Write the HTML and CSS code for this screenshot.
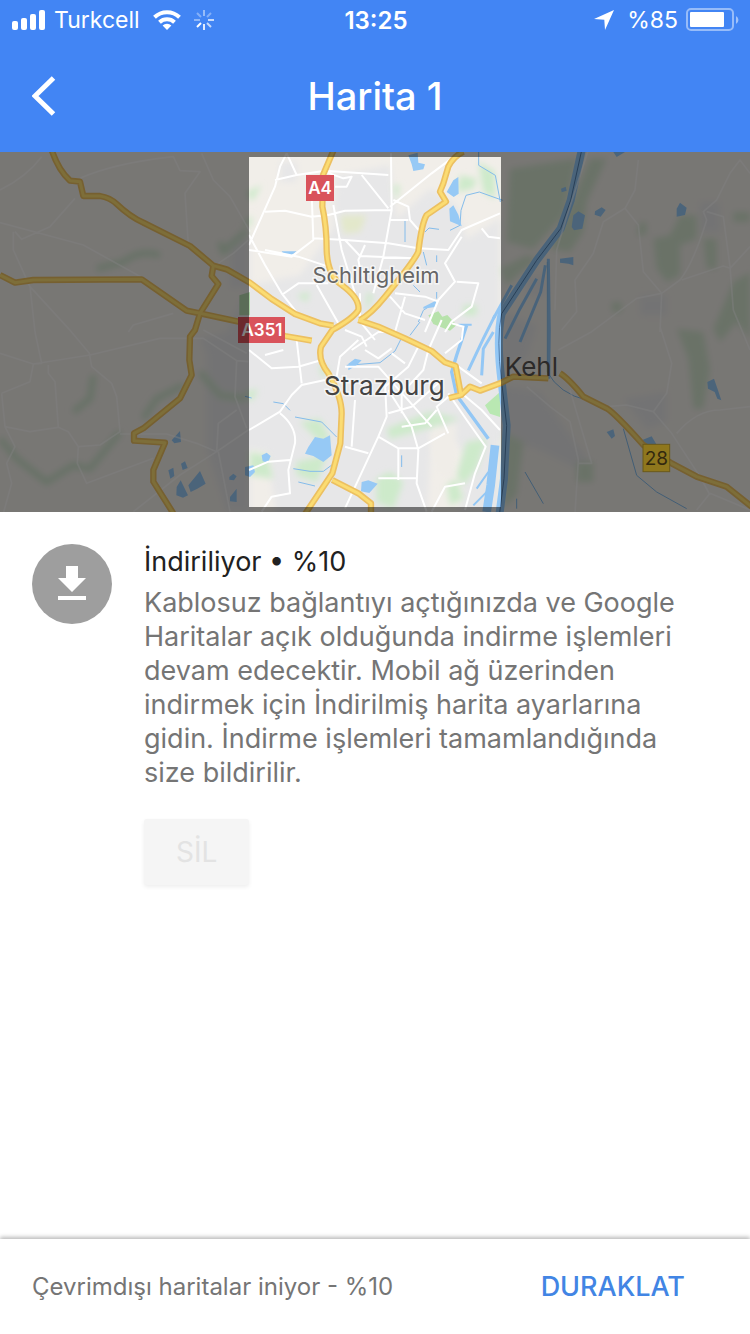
FILE: index.html
```html
<!DOCTYPE html>
<html lang="tr">
<head>
<meta charset="utf-8">
<meta name="viewport" content="width=device-width, initial-scale=1">
<title>Harita 1</title>
<link rel="stylesheet" href="styles.css">
</head>
<body>
<div class="screen">
  <header class="top">
    <div class="status">
      <div class="status-side">
        <svg class="signal" viewBox="0 0 34 22" aria-hidden="true"><rect x="0" y="12" width="6" height="9" rx="2"/><rect x="9" y="9" width="6" height="12" rx="2"/><rect x="18" y="5" width="6" height="16" rx="2"/><rect x="27" y="1" width="6" height="20" rx="2"/></svg>
        <span>Turkcell</span>
        <svg class="wifi" viewBox="0 0 28 22" aria-hidden="true"><path d="M1.500 8.300a18 18 0 0 1 25 0" class="arc"/><path d="M6.500 13.200a11 11 0 0 1 15 0" class="arc"/><path d="M14 21l-4.400-4.400a6.400 6.400 0 0 1 8.800 0z"/></svg>
        <svg class="spinner" viewBox="0 0 20 20" aria-hidden="true"><path d="M10 0v6" opacity=".45"/><path d="M17 3l-4 4" opacity=".35"/><path d="M20 10h-6" opacity=".7"/><path d="M17 17l-4-4" opacity=".7"/><path d="M10 20v-6" opacity=".85"/><path d="M3 17l4-4"/><path d="M0 10h6" opacity=".4"/><path d="M3 3l4 4" opacity=".35"/></svg>
      </div>
      <time class="clock">13:25</time>
      <div class="status-side status-end">
        <svg class="arrow" viewBox="0 0 20 20" aria-hidden="true"><path d="M20 0L11 20 10.300 9.700 0 9z"/></svg>
        <span>%85</span>
        <svg class="battery" viewBox="0 0 54 24" aria-hidden="true"><rect x="1" y="1" width="46" height="21" rx="4" fill="none" stroke="#fff" stroke-width="2" opacity=".45"/><rect x="4" y="4" width="34" height="15" rx="1"/><path d="M50 8a4.500 4.500 0 0 1 0 8z" opacity=".5"/></svg>
      </div>
    </div>
    <nav class="nav">
      <button class="back" type="button" aria-label="Geri"><svg viewBox="0 0 24 40"><path d="M21.500 2L3 20l18.500 18"/></svg></button>
      <h1 class="title">Harita 1</h1>
    </nav>
  </header>

  <main class="main">
    <svg class="map" viewBox="0 0 2250 1080" preserveAspectRatio="xMidYMid slice" role="img" aria-label="Strazburg haritası">
      <defs>
        <filter id="soft" x="-20%" y="-20%" width="140%" height="140%"><feGaussianBlur stdDeviation="10"/></filter>
        <g id="highways">
          <g transform="translate(0 -6)">
            <path d="M155 0Q175 60 210 92L240 95 250 138 300 138Q330 143 350 162 390 200 430 218L570 288 640 347 680 358 750 398 815 447 885 492 960 520 1000 527"/>
            <path d="M0 375L45 398 100 390 425 388 560 482 600 490 740 520 855 558 935 572"/>
            <path d="M640 347L635 378 655 402 600 490 585 540 570 560 568 630 575 675 540 745 430 835 402 850 402 872 495 878 460 960 460 995 520 1090"/>
          </g>
          <g transform="translate(735 -6)">
            <path d="M266 0L234 75 232 170Q245 230 245 300 247 375 290 405 345 445 340 480 325 505 262 540L228 590Q218 630 250 670 290 740 290 790L286 880 262 970 178 1095"/>
            <path d="M655 5Q625 20 610 50L595 100 585 125 603 155 545 195Q530 220 520 305 510 330 420 440 380 490 345 510"/>
            <path d="M340 510L400 530 480 565 560 603 600 637 632 648 648 735 612 744"/>
            <path d="M648 735L675 710 705 722 765 700 805 680 910 685"/>
            <path d="M262 990L340 1030 378 1060 378 1095"/>
          </g>
          <path transform="translate(1500 534)" d="M180 130Q205 145 250 200L320 235Q345 250 430 345L515 400 590 440 680 470 755 530"/>
        </g>
      </defs>

      <rect width="2250" height="1080" fill="#f1eee9"/>

      <!-- built-up land -->
      <g fill="#e7e7e8" filter="url(#soft)">
        <path d="M1010 70L1170 40 1190 200 1290 110 1370 160 1400 260 1500 200V1080H1380L1390 900 1300 800 1280 1090 830 1090 800 900 690 880 660 700 600 560 680 540 745 400 900 370 1000 230Z"/>
        <path d="M840 30h50v60h-50zM690 270l60-20v150l-60 10zM1500 700l120 20 90 130 60 80-40 20-120-60-110-30zM1590 130h50v60h-50zM1580 370h60v60h-60zM2100 150h60v90h-60zM1920 430h80v60h-80z"/>
        <path d="M620 560l130 50v470h-70l-60-190zM1870 740l130-20v90l-60 20zM1510 480l100 40-30 100-80 20z"/>
      </g>
      <path d="M1290 840l80-30-10 180-50-30z" fill="#f0ede8" filter="url(#soft)"/>

      <!-- woods and parks outside the city -->
      <g class="woods" filter="url(#soft)">
        <path d="M1530 50L1730 20 1690 190 1600 290 1520 270ZM1500 350l80-40 30 10-90 80zM1770 20h50l-60 130-10 90-40 60-60-10 70-150z"/>
        <path d="M1960 260l50-10 30-60h50v70l-50 20v90l-40 20-30-40zM2110 260h40v90h-30zM2200 390l50-30v200l-40-50-50 60-20-40zM1920 210h20v40h-30zM2200 180h50v30h-50z"/>
        <path d="M2030 530l80 10 20 110-20 120h-30l-15-150zM1510 840l60 30-20 160-40 40zM1730 930h50v60h-50zM1835 450h30v30h-30z"/>
      </g>
      <g class="river-woods" filter="url(#soft)">
        <path d="M290 350l80-20q50-40 110-20M0 860l50 60 90 70 80-50 50 10 90-110M220 780l50-40 10-70M430 800l40-60 80-40M600 660l60 70 80 10M660 270l10 30 70-65"/>
      </g>

      <!-- parks in the city -->
      <g fill="#cdeaca" filter="url(#soft)">
        <path d="M740 120l45-20-30 50zM725 220l30-30v30zM1380 70l50 10-10 30-50 10zM1435 30l50 30v80l-35-20zM1180 100h20l-10 50z"/>
        <path d="M1100 420l20 10-20 50zM955 640l30 10-15 30zM890 430l40-10-10 30zM1390 460h40v30h-40z"/>
        <path d="M1400 870l60-10-30 90-40 50-20-30zM890 930l90-20-30 80-60-20zM750 900l50 10 20 70-70-10zM735 720l40-10-20 40zM900 810l60-10 30 60-30 10z"/>
        <path d="M1160 830l130-50 90 20-100 30-110 30zM1130 980l40-20 40 30-30 80-50-20zM1340 1000l30-20 20 60-40 20z"/>
      </g>
      <path d="M1020 190h80l-20 50-50 5z" fill="#e3e8cb" filter="url(#soft)"/>
      <path d="M1285 490l30-12 12 16 15-5 28 30-20 17-50-20z" fill="#b7e2ab"/>
      <path d="M1455 760l45-40v75l-30-10z" fill="#b9e8b2"/>
      <path d="M718 430l32-10v70h-32z" fill="#b4d8ae"/>

      <!-- rivers -->
      <g fill="none" stroke="#93c7f5" stroke-linejoin="round">
        <path d="M1745 -5L1712 145 1682 230 1610 325 1505 485Q1488 560 1505 690L1520 820 1512 980 1498 1090" stroke-width="24"/>
        <path d="M1645 320L1648 534 1646 680M1636 340L1622 420 1560 570M1610 380L1560 470 1515 560M1535 400L1480 500" stroke-width="9"/>
        <path d="M1485 490L1450 560 1405 655M1480 540L1450 590 1445 670" stroke-width="9"/>
        <path d="M1400 520L1370 610 1355 660 1370 730 1465 860" stroke-width="10"/>
        <path d="M1485 880L1472 1000 1460 1080" stroke-width="26"/>
        <path d="M1465 960L1430 1010M1470 1010L1420 1060M1375 518h40" stroke-width="6"/>
      </g>
      <g fill="none" stroke="#84bceb" stroke-width="3">
        <path d="M1436 0v40l50 30 15 80M1508 145l-70-25-40 10-15 45-3 45-30 15M1275 240l12-12 30 4M1215 205v65M1270 300l10 40M1310 310v20M1240 400l20 20M1310 420v20M1255 510l15-35 30-20M1230 550l30-40M1040 640l100-8 45-35 20-40M885 795l80 15 45 45M880 950l50 8 40 0 40-30M895 990l50 12M1205 910v35M735 733l20 5M820 750l30 5 20 20"/>
        <path d="M1642 330v330q35 65 120 85M1870 830l40 140 60 50 90 50M1575 960l55 95M1550 1040v30"/>
      </g>
      <path d="M1745 -5L1712 145 1682 230 1610 325 1505 485Q1488 560 1505 690L1520 820 1512 980 1498 1090" fill="none" stroke="#527eac" stroke-width="3"/>

      <!-- lakes -->
      <g fill="#96c9f5">
        <path d="M925 885l20-30 25 5 20-10 5 60-25 20-30-18-25-7zM785 910l15-8 12 10-8 20-16-4zM735 945l25-5 5 20-15 15-15-5zM1085 990l20-5 28 10-25 28-25-5z"/>
        <path d="M1225 10l28-8 2 30 20 5-5 15-30 5-5-20zM1340 120l20-35 15-10 1 50-15 10zM1348 170l12-10 15 28 10 35-35-15zM845 298h45l-20 15-20-8zM1270 465l40-20-5 20-35 5zM1045 635l20-15 20 5-15 15-25 15z"/>
        <path d="M515 865l25-28 3 33-20 4zM505 955l15-8 3 25-12 8zM543 935l12-7 8 20-15 6zM530 1005l12-20 22 45-15 7-20-7zM565 1000l35-43 17 38-25 15-20 10zM688 975l12-10 10 8-8 12-14-2zM690 1035l20-25v40l-20-2zM2122 690l20-10 12 35 10 30-12-5-8-20-20-10z"/>
        <path d="M1715 225l5-35 15-12 20 12-8 40-25 5zM1785 178l20-12 12 8-15 20-18-6zM2030 170l10-18 20 15-5 22-25 5zM1680 320l40-5v25l-15-5-25-3zM1683 110l14-6 3 12-15 5zM1840 0h35l-25 15zM1820 840l20-8 5 20-10 8zM1925 865l30-12 15 25-40 5z"/>
      </g>

      <!-- local roads -->
      <g class="streets outer" transform="translate(0 -6)">
        <path d="M0 120Q80 80 125 20M0 218L250 285 430 385M240 85Q340 40 520 20L540 62 600 65 555 130 565 285M605 10L640 90 690 140 750 245M40 245V300L90 410 105 546M45 245L65 268 150 230 225 145M90 410L205 535M385 546L400 525 520 490M745 270L700 310 640 350M105 546L125 640 100 642 90 695 5 730M0 610L100 642 270 615 480 565H610L710 632 745 635M205 535L268 610 275 650 335 700 350 740 360 845 300 885 235 890 205 845 175 832 165 695 145 670V645M5 730L15 830 45 890 20 940 35 1000 10 1090M15 830L90 845 175 832M235 890L232 940 260 1000 460 925M360 852H500L590 880 650 905 745 840M400 1085L540 975 650 905M655 905L690 1085M650 905L655 820 710 780M610 540L740 610M710 632L705 740 740 835"/>
      </g>
      <g class="streets outer" transform="translate(1500 -6)">
        <path d="M265 0L200 200 170 300 165 480M415 30L405 120 375 175 310 215 280 310 225 390 230 485 185 540M375 175L415 225 430 365 485 430 480 546M175 600L275 545 410 445 485 430 540 390Q580 340 620 210L610 185 650 150 690 70 720 30 750 70M620 185L670 200 690 350 700 480 750 600M545 390L670 348 690 355 750 290M480 530L515 640 500 730 460 785 380 765 320 770M460 785L515 850 600 980 630 1035M530 850Q590 780 660 780L750 770M80 710L150 770 210 815 235 930 225 1090M210 720L275 940 235 940M630 1030L750 1080M630 1030L590 1080"/>
      </g>
      <g class="streets" transform="translate(735 -6)">
        <path d="M12 285L90 110 105 50 125 10M90 90L155 75 240 62 430 75M155 75L125 10M60 185L120 182 200 200 250 195 300 182 440 180M438 10L440 180 415 320 385 430M240 65L295 85 320 80 305 110 270 110M350 75L430 175M435 170L560 70 640 10M445 150L490 170 495 210 530 250M435 210H490M200 130L205 270 140 320 12 300M205 265L300 270 430 280 520 295 610 300 650 240 765 190M265 165L290 300 330 430M300 270L345 318 505 325M360 285L340 330 350 380M12 255L60 345 110 430 165 500M60 300L160 320 250 350M110 435L160 400 250 400M650 260L600 340 630 395 580 450 540 546M635 395L700 400 680 470 620 515 600 546M450 430L540 440 580 455M480 440L450 546M435 440L480 490 540 510M710 235L730 260 765 265M215 405L280 520M345 515V430"/>
        <path d="M350 520L390 570M590 510L550 600 535 660 470 730 470 790M620 520L655 530 650 570 600 610M300 540L350 560 365 590M340 570L285 620 275 680M320 600L400 546 430 546M440 595L400 625 360 600M520 590L490 650 420 710M12 600L80 655 160 650 230 630M60 615L115 600M155 570L170 700M240 690L170 705 140 735 105 785 12 840M105 790Q155 830 150 880L130 960 135 1030 80 1040 50 1085M12 960L70 935 135 930M420 700L425 800 400 860 300 1075M400 860L460 895 520 895 600 850M430 720L500 830 520 900 515 1000 545 1085M460 895V990M400 985H515M300 890L370 910M330 750L320 890M430 790L500 770 580 700M480 640L440 610M610 740L575 770 610 850M610 730L665 810 722 890 690 970 660 1080M650 730L710 780 765 840M470 830L540 820 575 780M640 650L710 700M300 650H400L480 740 560 830M560 1085L600 1010 660 1000"/>
      </g>

      <use href="#highways" class="casing"/>
      <use href="#highways" class="asphalt"/>

      <rect x="918" y="69" width="84" height="78" fill="#d9535b"/>
      <rect x="714" y="495" width="141" height="78" fill="#d9535b"/>
      <g text-anchor="middle">
        <text class="shield" x="960" y="127">A4</text>
        <text class="shield" x="786" y="552">A351</text>
        <text class="place suburb" x="1128" y="394">Schiltigheim</text>
        <text class="place" x="1153" y="729">Strazburg</text>
      </g>
      <path d="M0 0H2250V1080H0ZM747 15V1065H1503V15Z" fill-rule="evenodd" fill="#000" fill-opacity=".5"/>
      <rect x="1929" y="877" width="80" height="82" fill="#8f771d" stroke="#6b5a1b" stroke-width="3"/>
      <text class="shield shield-dark" x="1969" y="938" text-anchor="middle">28</text>
      <text class="place kehl" x="1594" y="672" text-anchor="middle">Kehl</text>
    </svg>

    <section class="details">
      <svg class="badge" viewBox="0 0 80 80" aria-hidden="true"><circle cx="40" cy="40" r="40" fill="#9e9e9e"/><path d="M34 22h12v12h8L40 48 26 34h8zM26 52h28v4H26z" fill="#fff"/></svg>
      <div class="info">
        <h2 class="state">İndiriliyor • %10</h2>
        <p class="message">Kablosuz bağlantıyı açtığınızda ve Google Haritalar açık olduğunda indirme işlemleri devam edecektir. Mobil ağ üzerinden indirmek için İndirilmiş harita ayarlarına gidin. İndirme işlemleri tamamlandığında size bildirilir.</p>
        <button class="delete" type="button" disabled>SİL</button>
      </div>
    </section>
  </main>

  <footer class="footer">
    <span class="progress">Çevrimdışı haritalar iniyor - %10</span>
    <button class="pause" type="button">DURAKLAT</button>
  </footer>
</div>
</body>
</html>
```
FILE: styles.css
```css
* { box-sizing: border-box; }

body {
  margin: 0;
  background: #fff;
  font-family: Inter, "Liberation Sans", sans-serif;
  color: #212121;
}

button {
  border: 0;
  background: none;
  font: inherit;
}

.screen {
  min-height: 100vh;
  display: flex;
  flex-direction: column;
}

.top {
  background: #4285f4;
  color: #fff;
}

.status {
  height: 40px;
  padding: 0 10px 0 12px;
  display: grid;
  grid-template-columns: 1fr auto 1fr;
  align-items: center;
  font-size: 23px;
}

.status svg { fill: #fff; }
.status-side { display: flex; align-items: center; gap: 8px; }
.status-end { justify-content: flex-end; }
.signal { width: 34px; height: 22px; }
.wifi { width: 28px; height: 22px; margin-left: 5px; }
.wifi .arc { fill: none; stroke: #fff; stroke-width: 4; }
.spinner { width: 20px; height: 20px; margin-left: 5px; stroke: #fff; stroke-width: 2; }
.clock { font-size: 24px; font-weight: 600; }
.arrow { width: 20px; height: 20px; margin-right: 5px; }
.battery { width: 54px; height: 24px; }

.nav {
  height: 112px;
  padding: 0 32px;
  display: grid;
  grid-template-columns: 1fr auto 1fr;
  align-items: center;
}

.back { justify-self: start; padding: 0; display: flex; }
.back svg { width: 24px; height: 40px; fill: none; stroke: #fff; stroke-width: 5; }
.title { margin: 0; font-size: 38px; font-weight: 500; }

.main { flex: 1; }

.map {
  display: block;
  width: 100%;
  height: 360px;
}

.woods { fill: #d4e5cf; }
.river-woods { fill: none; stroke: #cfe4cd; stroke-width: 20; stroke-linejoin: round; }
.streets { fill: none; stroke: #fff; stroke-width: 6; stroke-linejoin: round; }
.outer { stroke-width: 5; opacity: .5; }
.casing, .asphalt { fill: none; stroke-linejoin: round; }
.casing { stroke: #ecc061; stroke-width: 19; }
.asphalt { stroke: #fbdc72; stroke-width: 9; }

.place {
  font-size: 78px;
  fill: #444;
  stroke: #fff;
  stroke-width: 9;
  stroke-opacity: .6;
  paint-order: stroke;
}

.suburb { font-size: 66px; fill: #666; }
.kehl { fill: #2c2a29; stroke: none; }
.shield { font-size: 51px; font-weight: 600; fill: #fff; }
.shield-dark { font-size: 57px; font-weight: 400; fill: #33290f; }

.details {
  padding: 32px 64px 32px 32px;
  display: flex;
  align-items: flex-start;
  gap: 32px;
}

.badge { flex: none; width: 80px; height: 80px; }
.info { flex: 1; }
.state { margin: 0; font-size: 27px; line-height: 36px; font-weight: 400; }
.message { margin: 6px 0 0; font-size: 27px; line-height: 34px; color: #757575; }

.delete {
  margin-top: 29px;
  height: 66px;
  padding: 0 32px;
  border-radius: 3px;
  background: #f5f5f5;
  box-shadow: 0 2px 4px #eee;
  color: #e3e3e3;
  font-size: 28px;
}

.footer {
  height: 95px;
  padding: 0 65px 0 32px;
  display: flex;
  align-items: center;
  justify-content: space-between;
  box-shadow: 0 -2px 4px #bbb;
}

.progress { font-size: 24px; color: #757575; }
.pause { padding: 0; font-size: 27px; font-weight: 500; color: #4285e4; }
```
